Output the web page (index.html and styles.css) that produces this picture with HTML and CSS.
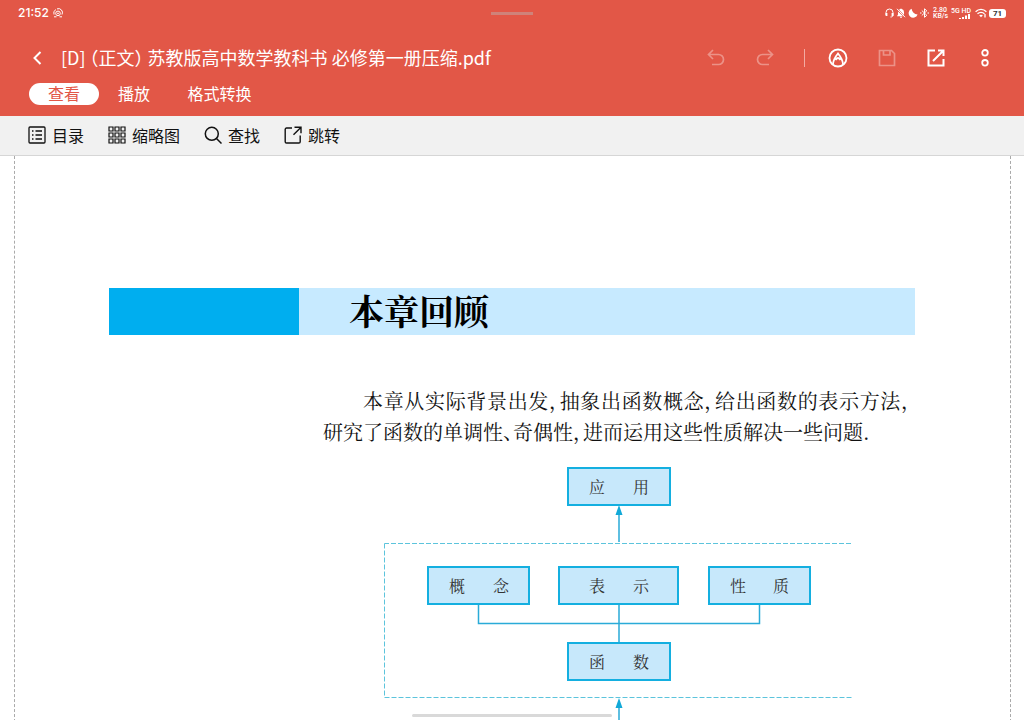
FILE: index.html
```html
<!DOCTYPE html>
<html lang="zh-CN">
<head>
<meta charset="utf-8">
<meta name="viewport" content="width=device-width, initial-scale=1">
<title>[D] (正文) 苏教版高中数学教科书 必修第一册压缩.pdf</title>
<link rel="stylesheet" href="styles.css">
</head>
<body>
<header class="header">
  <div class="status">
    <div class="status-group">
      <span class="clock">21:52</span>
      <svg width="10" height="10" viewBox="0 0 10 10" fill="none" stroke="#fff"><path d="M1 6.5A4 4 0 0 1 3 1.5M4 .9a4 4 0 0 1 5 5.6M1 8.8h2.5M6.5 8.8H9"/><circle cx="5" cy="5.4" r="2.3"/><circle cx="5" cy="5.4" r=".5"/></svg>
    </div>
    <div class="status-group status-right">
      <svg width="9" height="10" viewBox="0 0 9 10" fill="none" stroke="#fff"><path d="M1 7V4.5a3.5 3.5 0 0 1 7 0V7c0 1.5-1 2-2.5 2"/><path d="M1.5 5v3M7.5 5v3" stroke-width="1.8"/></svg>
      <svg width="10" height="10" viewBox="0 0 10 10"><path d="M1 8.200 2 6.500V3.500L7 8.200zM3 1.800 5 .6l2.400 1.300.6 2V7z" fill="#fff"/><path d="m1 .8 8 8.400M4 9.200h2" stroke="#fff"/></svg>
      <svg width="10" height="10" viewBox="0 0 10 10"><path d="M3.600.8A4.600 4.600 0 1 0 9.600 6.600 7 7 0 0 1 3.600.8z" fill="#fff"/></svg>
      <svg width="9" height="10" viewBox="0 0 9 10" fill="none" stroke="#fff"><path d="m1.800 2.500 5 4.800-2.300 2V.8l2.300 2-5 4.700M0 5h1.500M7.500 5H9"/></svg>
      <span class="rate"><span>2.80</span><span>KB/s</span></span>
      <span class="cell"><span class="net"><span>5G</span><span>HD</span></span><svg width="12" height="5" viewBox="0 0 12 5" fill="#fff"><path d="M0 4h2v1H0zM3 3h2v2H3zM6 1.500h2V5H6zM9 0h2v5H9z"/></svg></span>
      <svg width="12" height="10" viewBox="0 0 12 10" fill="none" stroke="#fff" stroke-width="1.300"><path d="M.6 3.800c3-3.200 7.800-3.200 10.800 0M2.500 5.800c2-2 5-2 7 0"/><path d="M4.200 7.500c1-.9 2.600-.9 3.600 0L6 9.200z" fill="#fff" stroke="none"/><path d="M10 6v3.500"/></svg>
      <span class="battery">71</span>
    </div>
    <span class="grip"></span>
  </div>
  <div class="titlebar">
    <button class="icon-button back" aria-label="返回"><svg width="12" height="16" viewBox="0 0 12 16" fill="none" stroke="#fff" stroke-width="2"><path d="M9.500 2 3.500 8l6 6"/></svg></button>
    <h1 class="file-name">[D] &#xFF08;正文&#xFF09; 苏教版高中数学教科书 必修第一册压缩.pdf</h1>
    <div class="actions">
      <button class="icon-button dim" aria-label="撤销"><svg width="20" height="20" viewBox="0 0 20 20" fill="none" stroke="#fff" stroke-width="1.700"><path d="M7 2 2.500 6.500 7 11M3 6.500h9.500a5 5 0 0 1 0 10H6"/></svg></button>
      <button class="icon-button dim" aria-label="重做"><svg width="20" height="20" viewBox="0 0 20 20" fill="none" stroke="#fff" stroke-width="1.700"><path d="M13 2l4.500 4.500L13 11M17 6.500H7.500a5 5 0 0 0 0 10H14"/></svg></button>
      <span class="divider"></span>
      <button class="icon-button" aria-label="批注"><svg width="20" height="20" viewBox="0 0 20 20" fill="none" stroke="#fff" stroke-width="1.800"><circle cx="10" cy="10" r="8.500"/><path d="M5 16c.5-4.500 2.500-7.500 5-10.500 2.500 3 4.500 6 5 10.500M7.500 12c1-1.500 1.800-2 2.500-2s1.500.5 2.500 2"/></svg></button>
      <button class="icon-button dim" aria-label="保存"><svg width="20" height="20" viewBox="0 0 20 20" fill="none" stroke="#fff" stroke-width="1.700"><path d="M2.500 2.500h12l3 3v12h-15zM6.500 2.500V7h6.500V2.500"/></svg></button>
      <button class="icon-button" aria-label="分享"><svg width="20" height="20" viewBox="0 0 20 20" fill="none" stroke="#fff" stroke-width="2"><path d="M9 2.500H2.500v15h15V11M12 2.500h5.500V8M17 3 7 13"/></svg></button>
      <button class="icon-button" aria-label="更多"><svg width="20" height="20" viewBox="0 0 20 20" fill="none" stroke="#fff" stroke-width="1.800"><circle cx="10" cy="4.800" r="2.800"/><circle cx="10" cy="14.800" r="2.800"/></svg></button>
    </div>
  </div>
  <nav class="tabs">
    <button class="tab active">查看</button>
    <button class="tab">播放</button>
    <button class="tab wide">格式转换</button>
  </nav>
</header>
<nav class="toolbar">
  <button class="tool"><svg width="18" height="18" viewBox="0 0 18 18" fill="none" stroke="#111" stroke-width="1.300"><rect x="1" y="1" width="16" height="16" rx="1"/><path d="M4 5h1.500M4 9h1.500M4 13h1.500M7.500 5H14M7.500 9H14M7.500 13H14"/></svg>目录</button>
  <button class="tool"><svg width="18" height="18" viewBox="0 0 18 18" fill="none" stroke="#111" stroke-width="1.200"><path d="M1 1h4v4H1zM7 1h4v4H7zM13 1h4v4h-4zM1 7h4v4H1zM7 7h4v4H7zM13 7h4v4h-4zM1 13h4v4H1zM7 13h4v4H7zM13 13h4v4h-4z"/></svg>缩略图</button>
  <button class="tool"><svg width="18" height="18" viewBox="0 0 18 18" fill="none" stroke="#111" stroke-width="1.500"><circle cx="7.800" cy="7.800" r="6.500"/><path d="m12.500 12.500 5 5"/></svg>查找</button>
  <button class="tool"><svg width="18" height="18" viewBox="0 0 18 18" fill="none" stroke="#111" stroke-width="1.400"><path d="M8 2H2.500A1.300 1.300 0 0 0 1.200 3.300v12.400A1.300 1.300 0 0 0 2.500 17h12.400a1.300 1.300 0 0 0 1.300-1.300V9.500M10.500 1.200H17v6M16.800 1.400 9.500 8.700"/></svg>跳转</button>
</nav>
<main class="viewer">
  <article class="page">
    <h2 class="chapter">本章回顾</h2>
    <p class="intro">本章从实际背景出发&#xFF0C;抽象出函数概念&#xFF0C;给出函数的表示方法&#xFF0C;研究了函数的单调性、奇偶性&#xFF0C;进而运用这些性质解决一些问题.</p>
    <svg class="diagram" width="470" height="260" viewBox="0 0 470 260" role="img" aria-label="函数知识结构图">
      <g class="frame"><path d="M467 76.500H0.500"/><path d="M.5 76.500V230.500"/><path d="M.5 230.500H469"/></g>
      <g class="links"><path d="M235 47V75M94.500 138V156.500H375.500V138M235 138V176M235 240V260"/></g>
      <g class="arrows"><path d="m235 38 3.500 10h-7zM235 231l3.500 10h-7z"/></g>
      <g class="nodes">
        <rect x="184" y="1" width="102" height="37"/>
        <rect x="44" y="100" width="101" height="37"/>
        <rect x="175" y="100" width="119" height="37"/>
        <rect x="325" y="100" width="101" height="37"/>
        <rect x="184" y="176" width="102" height="37"/>
      </g>
      <g class="labels">
        <text x="205 249" y="26">应用</text>
        <text x="65 109" y="125">概念</text>
        <text x="205 249" y="125">表示</text>
        <text x="346 389" y="125">性质</text>
        <text x="205 249" y="201">函数</text>
      </g>
    </svg>
  </article>
</main>
<span class="home-indicator"></span>
</body>
</html>
```
FILE: styles.css
```css
* { box-sizing: border-box; }

body {
  margin: 0;
  height: 100vh;
  display: flex;
  flex-direction: column;
  overflow: hidden;
  background: #fff;
  color: #111;
  font-family: "Noto Sans CJK SC", "Noto Sans", sans-serif;
}

button {
  margin: 0;
  padding: 0;
  border: 0;
  background: none;
  color: inherit;
  font: inherit;
}

svg { display: block; flex: none; }

.header {
  flex: none;
  background: #e25747;
  color: #fff;
  padding-bottom: 11px;
}

.status {
  position: relative;
  display: flex;
  justify-content: space-between;
  align-items: center;
  height: 26px;
  padding: 0 18px;
}

.status-group { display: flex; align-items: center; gap: 4px; }
.status-right { gap: 2px; }

.clock { font: 500 12px/16px Inter, sans-serif; }

.rate, .cell { display: flex; flex-direction: column; font: 500 7px/6px Roboto, sans-serif; }
.rate { width: 16px; margin-left: 2px; }
.cell { width: 20px; align-items: flex-end; margin-right: 2px; }
.net { display: flex; justify-content: space-between; width: 100%; }

.battery {
  width: 17px;
  border-radius: 3px;
  background: #fff;
  color: #333;
  font: 700 8px/9px Roboto, sans-serif;
  text-align: center;
}

.grip {
  position: absolute;
  left: 50%;
  top: 12px;
  width: 42px;
  height: 3px;
  margin-left: -21px;
  background: #cf8279;
}

.titlebar {
  display: flex;
  align-items: center;
  height: 64px;
  padding: 0 29px 0 31px;
}

.back { width: 12px; margin-right: 18px; }

.file-name {
  flex: 1;
  margin: 0;
  padding-bottom: 2px;
  font-size: 18px;
  line-height: 26px;
  font-weight: 400;
  font-feature-settings: "halt";
  white-space: nowrap;
}

.actions { display: flex; align-items: center; gap: 29px; }
.icon-button { display: block; }
.dim { opacity: 0.35; }
.divider { width: 1px; height: 18px; margin-right: -6px; background: #f3aba2; }

.tabs {
  display: flex;
  margin-top: -7px;
  padding-left: 29px;
}

.tab {
  width: 70px;
  height: 22px;
  padding-bottom: 2px;
  border-radius: 11px;
  font-size: 16px;
  line-height: 20px;
}

.tab.active { background: #fff; color: #e25747; }
.tab.wide { width: 101px; }

.toolbar {
  flex: none;
  display: flex;
  align-items: center;
  gap: 24px;
  height: 40px;
  padding: 0 0 2px 28px;
  border-bottom: 1px solid #d6d6d6;
  background: #f1f1f1;
}

.tool {
  display: flex;
  align-items: center;
  gap: 6px;
  font-size: 16px;
  line-height: 24px;
}

.viewer { flex: 1; min-height: 0; overflow: hidden; }

.page {
  margin: 0 13px 0 14px;
  padding: 132px 95px 0 94px;
  border: dashed #aaa;
  border-width: 0 1px;
}

.chapter {
  margin: 0;
  padding: 0 0 3px 50px;
  border-left: 190px solid #00aeef;
  background: #c7eaff;
  color: #000;
  font: 700 35px/44px "Noto Serif CJK SC", "Noto Sans CJK SC", serif;
}

.intro {
  margin: 50px 0 0 214px;
  padding-right: 4px;
  color: #111;
  font-family: "Noto Serif CJK SC", "Noto Sans CJK SC", serif;
  font-size: 20px;
  line-height: 31px;
  font-feature-settings: "halt";
  text-align: justify;
  text-indent: 2em;
}

.diagram { margin: 20px 0 0 275px; }

.frame { fill: none; stroke: #5cc4dc; stroke-dasharray: 5 2; }
.links { fill: none; stroke: #2aabd8; stroke-width: 1.5; }
.arrows { fill: #12a9d8; }
.nodes { fill: #c7e8fb; stroke: #14afe0; stroke-width: 2; }
.labels {
  fill: #333;
  font-family: "Noto Serif CJK SC", "Noto Sans CJK SC", serif;
  font-size: 16px;
}

.home-indicator {
  position: fixed;
  left: 50%;
  bottom: 3px;
  width: 200px;
  height: 3px;
  margin-left: -100px;
  border-radius: 2px;
  background: #d9d9d9;
}
```
